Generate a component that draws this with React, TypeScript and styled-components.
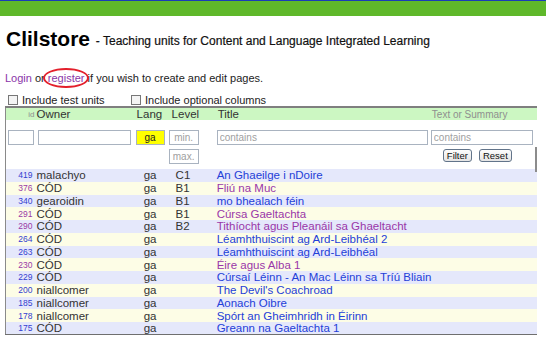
import React from 'react';
import styled, { createGlobalStyle } from 'styled-components';

interface Unit {
  id: number;
  owner: string;
  lang: string;
  level: string;
  title: string;
  visited: boolean;
}

const units: Unit[] = [
  { id: 419, owner: 'malachyo', lang: 'ga', level: 'C1', title: 'An Ghaeilge i nDoire', visited: false },
  { id: 376, owner: 'CÓD', lang: 'ga', level: 'B1', title: 'Fliú na Muc', visited: true },
  { id: 340, owner: 'gearoidin', lang: 'ga', level: 'B1', title: 'mo bhealach féin', visited: false },
  { id: 291, owner: 'CÓD', lang: 'ga', level: 'B1', title: 'Cúrsa Gaeltachta', visited: true },
  { id: 290, owner: 'CÓD', lang: 'ga', level: 'B2', title: 'Tithíocht agus Pleanáil sa Ghaeltacht', visited: true },
  { id: 264, owner: 'CÓD', lang: 'ga', level: '', title: 'Léamhthuiscint ag Ard-Leibhéal 2', visited: false },
  { id: 263, owner: 'CÓD', lang: 'ga', level: '', title: 'Léamhthuiscint ag Ard-Leibhéal', visited: false },
  { id: 230, owner: 'CÓD', lang: 'ga', level: '', title: 'Éire agus Alba 1', visited: true },
  { id: 229, owner: 'CÓD', lang: 'ga', level: '', title: 'Cúrsaí Léinn - An Mac Léinn sa Tríú Bliain', visited: false },
  { id: 200, owner: 'niallcomer', lang: 'ga', level: '', title: "The Devil's Coachroad", visited: false },
  { id: 185, owner: 'niallcomer', lang: 'ga', level: '', title: 'Aonach Oibre', visited: false },
  { id: 178, owner: 'niallcomer', lang: 'ga', level: '', title: 'Spórt an Gheimhridh in Éirinn', visited: false },
  { id: 175, owner: 'CÓD', lang: 'ga', level: '', title: 'Greann na Gaeltachta 1', visited: false },
];

const GlobalStyle = createGlobalStyle`
  body {
    margin: 0;
    background: #fff;
    font-family: "Liberation Sans", Arial, sans-serif;
    color: #222;
  }
`;

const App = () => {
  return (
    <>
      <GlobalStyle />
      <TopBar />
      <Title>
        Clilstore <Subtitle>- Teaching units for Content and Language Integrated Learning</Subtitle>
      </Title>
      <LoginLine>
        <VisitedLink href="#">Login</VisitedLink> or{' '}
        <Circled>
          <VisitedLink href="#">register</VisitedLink>
        </Circled>{' '}
        if you wish to create and edit pages.
      </LoginLine>
      <Options>
        <CheckLabel $w={123}>
          <Box type="checkbox" /> Include test units
        </CheckLabel>
        <CheckLabel>
          <Box type="checkbox" /> Include optional columns
        </CheckLabel>
      </Options>
      <Table>
        <colgroup>
          <col style={{ width: 30 }} />
          <col style={{ width: 98 }} />
          <col style={{ width: 32 }} />
          <col style={{ width: 48 }} />
          <col style={{ width: 214 }} />
          <col style={{ width: 109 }} />
        </colgroup>
        <thead>
          <HeadRow>
            <HeadCell $align="right">
              <Faint>id</Faint>
            </HeadCell>
            <HeadCell>Owner</HeadCell>
            <HeadCell $pad={3}>Lang</HeadCell>
            <HeadCell $pad={6}>Level</HeadCell>
            <HeadCell $pad={4}>Title</HeadCell>
            <HeadCell $pad={4}>
              <Faint $size={10}>Text or Summary</Faint>
            </HeadCell>
          </HeadRow>
          <FilterRow>
            <FilterCell>
              <Field $w={26} $ml={2} />
            </FilterCell>
            <FilterCell>
              <Field $w={93} $ml={2} />
            </FilterCell>
            <FilterCell>
              <Field $w={29} $ml={2} $yellow defaultValue="ga" />
            </FilterCell>
            <FilterCell>
              <Stack>
                <Field $w={30} $ml={3} placeholder="min." $center />
                <Field $w={30} $ml={3} placeholder="max." $center />
              </Stack>
            </FilterCell>
            <FilterCell>
              <Field $w={211} $ml={3} placeholder="contains" />
            </FilterCell>
            <FilterCell>
              <Stack>
                <Field $w={102} $ml={3} placeholder="contains" />
                <Buttons>
                  <SmallButton>Filter</SmallButton>
                  <SmallButton>Reset</SmallButton>
                </Buttons>
              </Stack>
              <EdgeMark />
            </FilterCell>
          </FilterRow>
        </thead>
        <tbody>
          {units.map((u, i) => (
            <DataRow key={u.id} $odd={i % 2 === 1}>
              <IdCell $visited={u.visited}>{u.id}</IdCell>
              <Cell>{u.owner}</Cell>
              <Cell $align="center">{u.lang}</Cell>
              <Cell $pad={10}>{u.level}</Cell>
              <Cell $pad={3} colSpan={2}>
                <TitleLink href="#" $visited={u.visited}>
                  {u.title}
                </TitleLink>
              </Cell>
            </DataRow>
          ))}
        </tbody>
      </Table>
    </>
  );
};

const TopBar = styled.div`
  height: 15px;
  border-top: 1px solid #1a3cb8;
  background: #5fb82a;
`;

const Title = styled.h1`
  margin: 10px 0 0 0;
  padding-left: 6px;
  font-size: 21px;
  line-height: 26px;
  font-weight: bold;
  color: #000;
`;

const Subtitle = styled.span`
  font-size: 12px;
  font-weight: normal;
  color: #111;
  vertical-align: 1px;
  -webkit-text-stroke: 0.2px #111;
`;

const LoginLine = styled.p`
  margin: 17px 0 0 0;
  padding-left: 5px;
  font-size: 11px;
  line-height: 14px;
  color: #222;
`;

const VisitedLink = styled.a`
  color: #8a35a8;
  text-decoration: none;
`;

const Circled = styled.span`
  position: relative;

  &::after {
    content: '';
    position: absolute;
    left: -5px;
    right: -4px;
    top: -4px;
    bottom: -4px;
    border: 2px solid #e3202c;
    border-radius: 50%;
    pointer-events: none;
  }
`;

const Options = styled.div`
  display: flex;
  margin-top: 9px;
  padding-left: 8px;
  height: 12px;
  align-items: center;
`;

const CheckLabel = styled.label<{ $w?: number }>`
  display: flex;
  align-items: center;
  gap: 4px;
  width: ${(p) => (p.$w ? `${p.$w}px` : 'auto')};
  font-size: 11px;
  color: #222;
`;

const Box = styled.input`
  appearance: none;
  margin: 0;
  width: 10px;
  height: 10px;
  border: 1px solid #777;
  background: #f4f4f4;
`;

const Table = styled.table`
  margin-left: 5px;
  width: 532px;
  border-collapse: collapse;
  table-layout: fixed;
  border-top: 2px solid #7f7f7f;
  border-left: 1px solid #8a8a8a;
  border-bottom: 1px solid #6f6f6f;
  font-size: 11.5px;
`;

const HeadRow = styled.tr`
  background: #ccf7c2;
  height: 10px;
`;

const HeadCell = styled.th<{ $align?: string; $pad?: number }>`
  padding: 0 ${(p) => (p.$align === 'right' ? 1 : 0)}px 0 ${(p) => p.$pad ?? 1}px;
  text-align: ${(p) => p.$align ?? 'left'};
  font-weight: normal;
  color: #333;
  line-height: 10px;
  height: 10px;
  white-space: nowrap;
  overflow: visible;
`;

const Faint = styled.span<{ $size?: number }>`
  font-size: ${(p) => p.$size ?? 8}px;
  color: #8f8f8f;
`;

const FilterRow = styled.tr`
  height: 49px;
`;

const FilterCell = styled.td`
  vertical-align: top;
  padding: 10px 0 0 0;
  position: relative;
`;

const Stack = styled.div`
  display: flex;
  flex-direction: column;
  gap: 4px;
`;

const Field = styled.input<{ $w: number; $ml: number; $yellow?: boolean; $center?: boolean }>`
  box-sizing: border-box;
  display: block;
  width: ${(p) => p.$w}px;
  height: 15px;
  margin-left: ${(p) => p.$ml}px;
  padding: 0 2px;
  border: 1px solid #a9b3c0;
  background: ${(p) => (p.$yellow ? '#ffff00' : '#fff')};
  font-family: "Liberation Sans", Arial, sans-serif;
  font-size: 10px;
  color: #222;
  text-align: ${(p) => (p.$yellow || p.$center ? 'center' : 'left')};

  &::placeholder {
    color: #a0a0a0;
  }
`;

const Buttons = styled.div`
  display: flex;
  gap: 7px;
  padding-left: 15px;
`;

const SmallButton = styled.button`
  box-sizing: border-box;
  height: 13px;
  padding: 0 3px;
  border: 1px solid #62748a;
  border-radius: 3px;
  background: linear-gradient(#fdfdfd, #e4e4e4);
  font-family: "Liberation Sans", Arial, sans-serif;
  font-size: 9.5px;
  line-height: 11px;
  color: #111;
`;

const EdgeMark = styled.div`
  position: absolute;
  right: 0;
  top: 27px;
  width: 2px;
  height: 25px;
  background: #8c8c8c;
`;

const DataRow = styled.tr<{ $odd: boolean }>`
  background: ${(p) => (p.$odd ? '#fdfde6' : '#e5e8fb')};
  height: 12.75px;
`;

const Cell = styled.td<{ $align?: string; $pad?: number }>`
  padding: 0 0 0 ${(p) => p.$pad ?? 1}px;
  text-align: ${(p) => p.$align ?? 'left'};
  color: #333;
  line-height: 12px;
  white-space: nowrap;
  overflow: hidden;
`;

const IdCell = styled.td<{ $visited: boolean }>`
  padding: 0 3px 0 0;
  text-align: right;
  font-size: 8.5px;
  line-height: 12px;
  color: ${(p) => (p.$visited ? '#9a3aa6' : '#3340d0')};
`;

const TitleLink = styled.a<{ $visited: boolean }>`
  color: ${(p) => (p.$visited ? '#9a37a8' : '#2440d8')};
  text-decoration: none;
`;

export default App;
